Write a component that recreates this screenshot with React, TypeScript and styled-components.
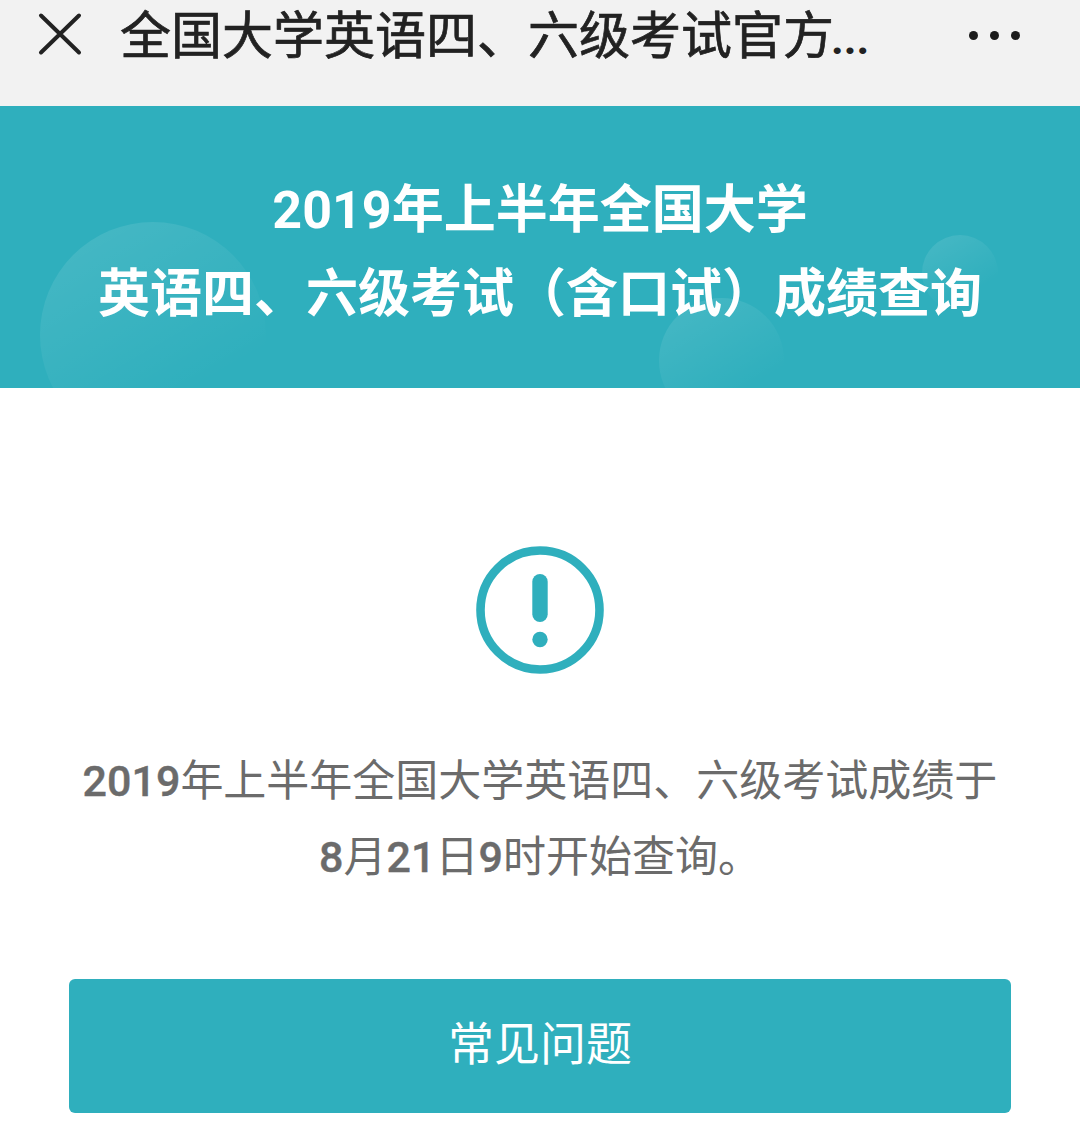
import styled, { createGlobalStyle } from "styled-components";

const TEAL = "#2fafbd";

const GlobalStyle = createGlobalStyle`
    html, body {
        margin: 0;
        padding: 0;
        background: #fff;
    }
    body {
        font-family: "Roboto", "Noto Sans CJK SC", sans-serif;
    }
`;

const Page = styled.div`
    width: 1080px;
    height: 1138px;
    overflow: hidden;
    display: flex;
    flex-direction: column;
`;

const TopBar = styled.div`
    height: 106px;
    flex-shrink: 0;
    box-sizing: border-box;
    padding: 0 60px 34px 37px;
    background: #f2f2f2;
    display: flex;
    align-items: center;
`;

const CloseIcon = styled.svg`
    flex-shrink: 0;
    margin-bottom: 4px;
`;

const BarTitle = styled.div`
    flex: 1;
    margin: 4px 0 0 37px;
    font-size: 51px;
    line-height: 72px;
    color: #222;
    -webkit-text-stroke: 0.7px #222;
    white-space: nowrap;
`;

const Ellipsis = styled.span`
    margin-left: -3px;
    font-size: 44px;
    font-weight: 700;
    -webkit-text-stroke: 0;
`;

const Dots = styled.div`
    display: flex;
    gap: 12px;
    margin-bottom: 2px;
`;

const Dot = styled.span`
    width: 9px;
    height: 9px;
    border-radius: 50%;
    background: #1c1c1c;
`;

const Banner = styled.div`
    position: relative;
    height: 282px;
    flex-shrink: 0;
    box-sizing: border-box;
    padding-top: 63px;
    overflow: hidden;
    background: ${TEAL};
`;

const Bubble = styled.span<{ $size: number; $left: number; $top: number }>`
    position: absolute;
    left: ${(p) => p.$left}px;
    top: ${(p) => p.$top}px;
    width: ${(p) => p.$size}px;
    height: ${(p) => p.$size}px;
    border-radius: 50%;
    background: linear-gradient(150deg, rgba(255, 255, 255, 0.12), rgba(255, 255, 255, 0) 72%);
`;

const BannerTitle = styled.h1`
    position: relative;
    margin: 0;
    font-size: 52px;
    line-height: 84px;
    font-weight: 700;
    color: #fff;
    text-align: center;
`;

const Content = styled.div`
    flex: 1;
    display: flex;
    flex-direction: column;
    align-items: center;
    padding-top: 157px;
`;

const Notice = styled.p`
    margin: 68px 0 0;
    font-size: 43px;
    line-height: 76px;
    color: #6b6b6b;
    text-align: center;
`;

const Num = styled.span`
    font-weight: 500;
    -webkit-text-stroke: 0.4px #6b6b6b;
`;

const ActionButton = styled.button`
    width: 942px;
    height: 134px;
    margin-top: 84px;
    padding: 0 0 12px;
    border: none;
    border-radius: 6px;
    background: ${TEAL};
    color: #fff;
    font-family: inherit;
    font-size: 46px;
`;

export default function App() {
    return (
        <Page>
            <GlobalStyle />
            <TopBar>
                <CloseIcon width="46" height="46" viewBox="0 0 46 46">
                    <path d="M4 4.5 L42 41.5 M42 4.5 L4 41.5" stroke="#222" strokeWidth="4" strokeLinecap="round" fill="none" />
                </CloseIcon>
                <BarTitle>
                    全国大学英语四、六级考试官方<Ellipsis>...</Ellipsis>
                </BarTitle>
                <Dots>
                    <Dot />
                    <Dot />
                    <Dot />
                </Dots>
            </TopBar>
            <Banner>
                <Bubble $size={226} $left={40} $top={116} />
                <Bubble $size={125} $left={659} $top={192} />
                <Bubble $size={76} $left={922} $top={129} />
                <BannerTitle>
                    2019年上半年全国大学
                    <br />
                    英语四、六级考试（含口试）成绩查询
                </BannerTitle>
            </Banner>
            <Content>
                <svg width="130" height="130" viewBox="0 0 130 130">
                    <circle cx="65" cy="65" r="59.5" fill="none" stroke={TEAL} strokeWidth="8.6" />
                    <rect x="57.3" y="29" width="15.4" height="48" rx="7.7" fill={TEAL} />
                    <circle cx="65" cy="94.5" r="7.7" fill={TEAL} />
                </svg>
                <Notice>
                    <Num>2019</Num>年上半年全国大学英语四、六级考试成绩于
                    <br />
                    <Num>8</Num>月<Num>21</Num>日<Num>9</Num>时开始查询。
                </Notice>
                <ActionButton>常见问题</ActionButton>
            </Content>
        </Page>
    );
}
